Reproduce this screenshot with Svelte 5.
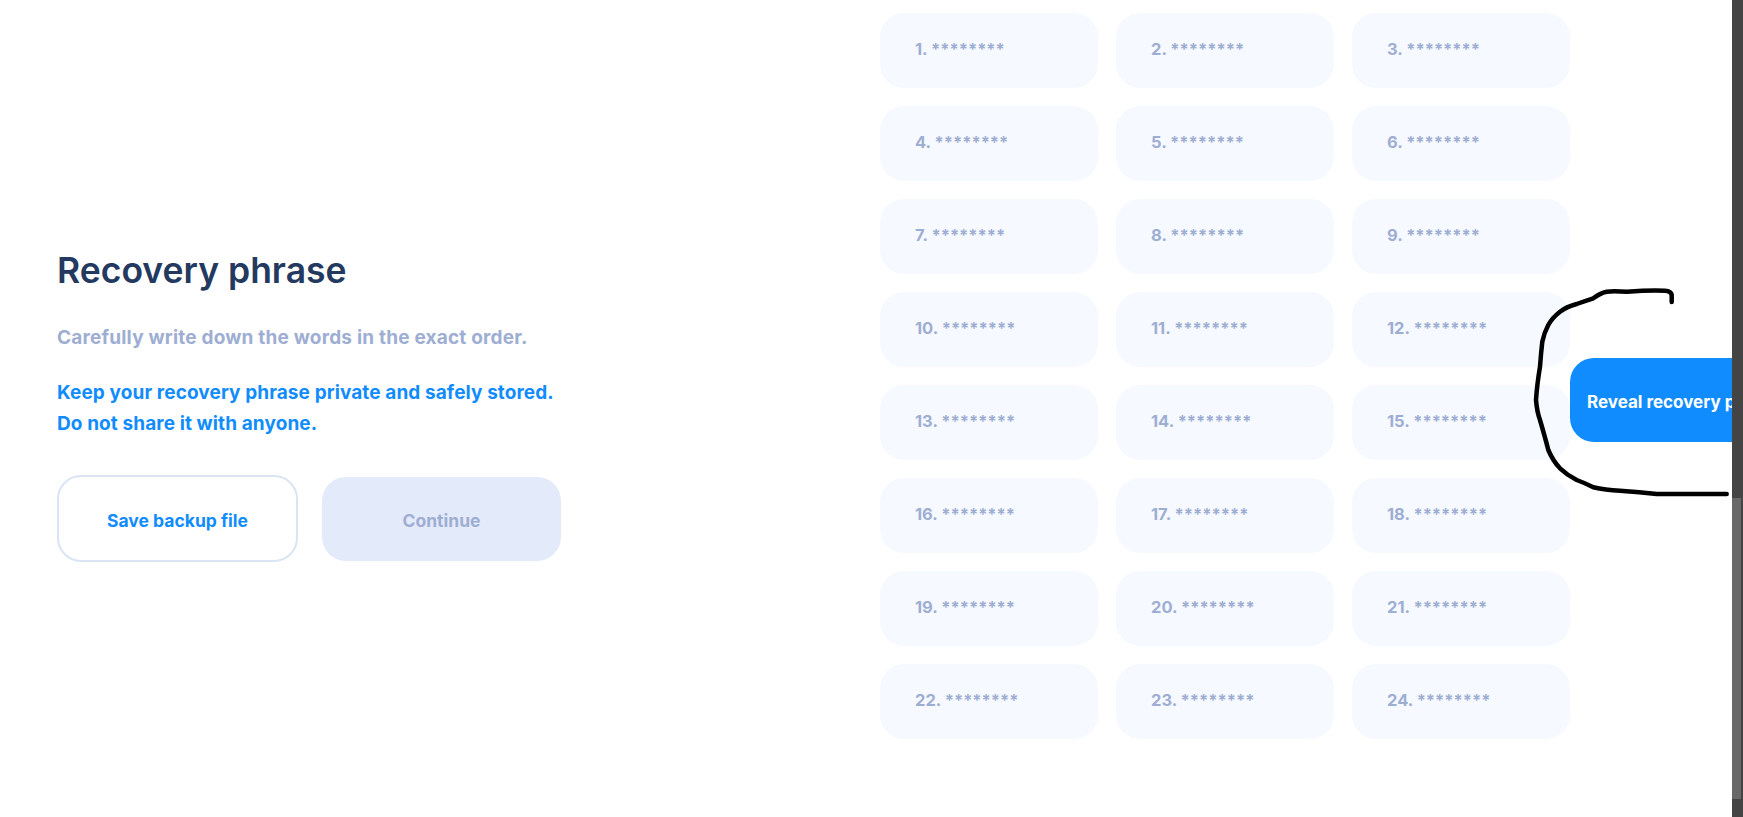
<script>
    const words = Array.from({ length: 24 }, (_, i) => i + 1);
</script>

<div class="page">
    <main class="content">
        <section class="intro">
            <h1>Recovery phrase</h1>
            <p class="hint">Carefully write down the words in the exact order.</p>
            <p class="warning">
                Keep your recovery phrase private and safely stored.<br />
                Do not share it with anyone.
            </p>
            <div class="actions">
                <button class="btn btn-outline">Save backup file</button>
                <button class="btn btn-disabled">Continue</button>
            </div>
        </section>

        <section class="phrase">
            <div class="grid">
                {#each words as n}
                    <div class="word">{n}. ********</div>
                {/each}
            </div>
            <button class="reveal">Reveal recovery phrase</button>
        </section>
    </main>

    <div class="scrollbar">
        <div class="track"></div>
        <div class="thumb"></div>
        <div class="arrow"></div>
    </div>

    <!-- hand drawn annotation over the screenshot -->
    <svg class="scribble" width="1743" height="817" viewBox="0 0 1743 817" fill="none">
        <path
            d="M1671.7 302 L1671.7 295 Q1671 291 1665 290.7 Q1650 290 1626.7 291.7 Q1612 291 1606.7 291.7 Q1600 293 1593.3 298.3 Q1585 301 1576.7 304 Q1566 307 1560 311.7 Q1552 318 1548.3 325 Q1544 333 1542.3 341.7 Q1541 353 1540 366.7 Q1537 385 1536 400 Q1537 412 1540 420 Q1545 437 1548.3 450 Q1553 461 1560 468.3 Q1567 475 1576.7 480 Q1585 483 1593.3 487.3 Q1605 490 1620 490.7 Q1640 492 1656.7 494 L1726.7 494"
            stroke="#000"
            stroke-width="4.5"
            stroke-linecap="round"
            stroke-linejoin="round"
        />
    </svg>
</div>

<style>
    :global(body) {
        background: #fff;
    }

    .page {
        position: relative;
        display: flex;
        height: 817px;
        overflow: hidden;
        font-family: Inter, "Noto Sans", sans-serif;
    }

    .content {
        flex: 1;
        display: flex;
        min-width: 0;
        overflow: hidden;
    }

    .intro {
        width: 880px;
        flex-shrink: 0;
        box-sizing: border-box;
        padding: 249px 0 0 57px;
    }

    h1 {
        margin: 0;
        font-size: 35.5px;
        line-height: 44px;
        font-weight: 600;
        color: #24395f;
    }

    .hint {
        margin: 29px 0 0;
        font-size: 19px;
        line-height: 31px;
        font-weight: 700;
        letter-spacing: 0.2px;
        color: #9eaed3;
    }

    .warning {
        margin: 24px 0 0;
        font-size: 19px;
        line-height: 31px;
        font-weight: 700;
        letter-spacing: 0.1px;
        color: #118cff;
    }

    .actions {
        display: flex;
        align-items: center;
        gap: 24px;
        margin-top: 36px;
    }

    .btn {
        font-family: inherit;
        font-size: 17.5px;
        font-weight: 700;
        border-radius: 24px;
        box-sizing: border-box;
        padding-top: 4px;
    }

    .btn-outline {
        width: 241px;
        height: 87px;
        background: #fff;
        border: 2px solid #dbe4f5;
        color: #118cff;
    }

    .btn-disabled {
        width: 239px;
        height: 84px;
        background: #e3eafa;
        border: none;
        color: #9eaed3;
    }

    .phrase {
        display: flex;
        align-items: flex-start;
        padding-top: 13px;
    }

    .grid {
        display: grid;
        grid-template-columns: repeat(3, 218px);
        grid-auto-rows: 75px;
        gap: 18px;
        flex-shrink: 0;
    }

    .word {
        box-sizing: border-box;
        padding: 24px 0 0 35px;
        background: #f6f9ff;
        border-radius: 24px;
        font-size: 16.5px;
        line-height: 24px;
        font-weight: 700;
        color: #9eaed3;
    }

    .reveal {
        flex-shrink: 0;
        width: 240px;
        height: 84px;
        margin-top: 345px;
        padding: 4px 0 0 17px;
        background: #118cff;
        border: none;
        border-radius: 24px;
        color: #fff;
        font-family: inherit;
        font-size: 17px;
        font-weight: 700;
        text-align: left;
    }

    .scrollbar {
        flex-shrink: 0;
        width: 11px;
        display: flex;
        flex-direction: column;
        background: #444;
    }

    .track {
        height: 498px;
    }

    .thumb {
        height: 301px;
        width: 9px;
        background: #686868;
    }

    .arrow {
        flex: 1;
    }

    .scribble {
        position: absolute;
        inset: 0;
        pointer-events: none;
    }
</style>
